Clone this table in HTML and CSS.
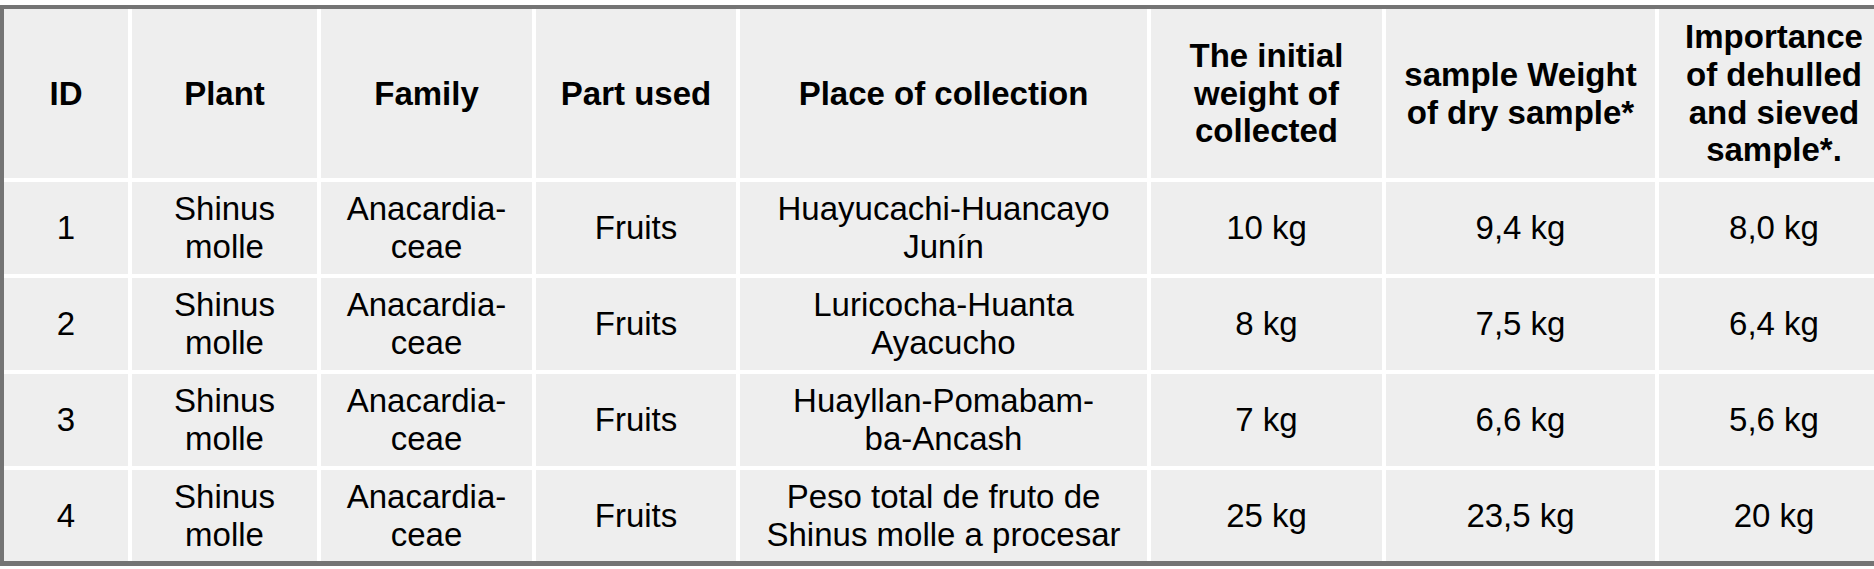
FILE: index.html
```html
<!DOCTYPE html>
<html lang="en">
<head>
<meta charset="utf-8">
<title>Samples</title>
<link rel="stylesheet" href="styles.css">
</head>
<body>
<div class="table" role="table">
  <div class="cell head">ID</div>
  <div class="cell head">Plant</div>
  <div class="cell head">Family</div>
  <div class="cell head">Part used</div>
  <div class="cell head">Place of collection</div>
  <div class="cell head">The initial<br>weight of<br>collected</div>
  <div class="cell head">sample Weight<br>of dry sample*</div>
  <div class="cell head">Importance<br>of dehulled<br>and sieved<br>sample*.</div>

  <div class="cell">1</div>
  <div class="cell">Shinus<br>molle</div>
  <div class="cell">Anacardia-<br>ceae</div>
  <div class="cell">Fruits</div>
  <div class="cell">Huayucachi-Huancayo<br>Junín</div>
  <div class="cell">10 kg</div>
  <div class="cell">9,4 kg</div>
  <div class="cell">8,0 kg</div>

  <div class="cell">2</div>
  <div class="cell">Shinus<br>molle</div>
  <div class="cell">Anacardia-<br>ceae</div>
  <div class="cell">Fruits</div>
  <div class="cell">Luricocha-Huanta<br>Ayacucho</div>
  <div class="cell">8 kg</div>
  <div class="cell">7,5 kg</div>
  <div class="cell">6,4 kg</div>

  <div class="cell">3</div>
  <div class="cell">Shinus<br>molle</div>
  <div class="cell">Anacardia-<br>ceae</div>
  <div class="cell">Fruits</div>
  <div class="cell">Huayllan-Pomabam-<br>ba-Ancash</div>
  <div class="cell">7 kg</div>
  <div class="cell">6,6 kg</div>
  <div class="cell">5,6 kg</div>

  <div class="cell">4</div>
  <div class="cell">Shinus<br>molle</div>
  <div class="cell">Anacardia-<br>ceae</div>
  <div class="cell">Fruits</div>
  <div class="cell">Peso total de fruto de<br>Shinus molle a procesar</div>
  <div class="cell">25 kg</div>
  <div class="cell">23,5 kg</div>
  <div class="cell">20 kg</div>
</div>
</body>
</html>
```

FILE: styles.css
```css
html, body {
  margin: 0;
  padding: 0;
  background: #ffffff;
  overflow: hidden;
}

body {
  padding-top: 5px;
  font-family: "Liberation Sans", Arial, sans-serif;
  font-size: 33px;
  line-height: 1.15;
  color: #000000;
}

.table {
  display: inline-grid;
  grid-template-columns: 124px 185px 211px 200px 407px 231px 269px 230px;
  grid-template-rows: 169px 92px 92px 92px 91px;
  gap: 4px;
  background: #ffffff;
  border-style: solid;
  border-color: #747474;
  border-width: 4px 4px 5px 4px;
}

.cell {
  background: #eeeeee;
  display: flex;
  align-items: center;
  justify-content: center;
  text-align: center;
}

.head {
  font-weight: bold;
}
```
